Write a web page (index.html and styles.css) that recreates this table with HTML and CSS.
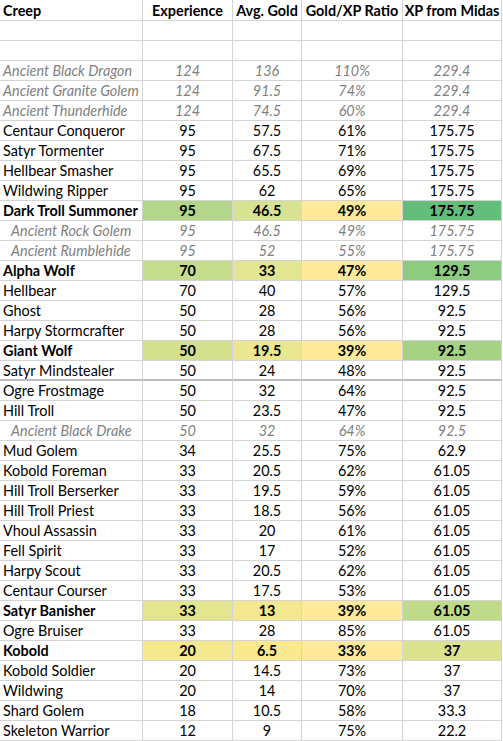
FILE: index.html
```html
<!DOCTYPE html>
<html lang="en">
<head>
<meta charset="utf-8">
<title>Creep XP table</title>
<link rel="stylesheet" href="styles.css">
</head>
<body>
<table class="sheet">
  <thead>
    <tr class="head">
      <th class="c1">Creep</th>
      <th class="c2">Experience</th>
      <th class="c3">Avg. Gold</th>
      <th class="c4">Gold/XP Ratio</th>
      <th class="c5">XP from Midas</th>
    </tr>
  </thead>
  <tbody>
    <tr><td></td><td></td><td></td><td></td><td></td></tr>
    <tr><td></td><td></td><td></td><td></td><td></td></tr>
    <tr class="anc"><td>Ancient Black Dragon</td><td>124</td><td>136</td><td>110%</td><td>229.4</td></tr>
    <tr class="anc"><td>Ancient Granite Golem</td><td>124</td><td>91.5</td><td>74%</td><td>229.4</td></tr>
    <tr class="anc"><td>Ancient Thunderhide</td><td>124</td><td>74.5</td><td>60%</td><td>229.4</td></tr>
    <tr><td>Centaur Conqueror</td><td>95</td><td>57.5</td><td>61%</td><td>175.75</td></tr>
    <tr><td>Satyr Tormenter</td><td>95</td><td>67.5</td><td>71%</td><td>175.75</td></tr>
    <tr><td>Hellbear Smasher</td><td>95</td><td>65.5</td><td>69%</td><td>175.75</td></tr>
    <tr><td>Wildwing Ripper</td><td>95</td><td>62</td><td>65%</td><td>175.75</td></tr>
    <tr class="hl"><td>Dark Troll Summoner</td><td class="e95">95</td><td class="g46">46.5</td><td class="r">49%</td><td class="m175">175.75</td></tr>
    <tr class="anc ind"><td>Ancient Rock Golem</td><td>95</td><td>46.5</td><td>49%</td><td>175.75</td></tr>
    <tr class="anc ind"><td>Ancient Rumblehide</td><td>95</td><td>52</td><td>55%</td><td>175.75</td></tr>
    <tr class="hl"><td>Alpha Wolf</td><td class="e70">70</td><td class="g33">33</td><td class="r">47%</td><td class="m129">129.5</td></tr>
    <tr><td>Hellbear</td><td>70</td><td>40</td><td>57%</td><td>129.5</td></tr>
    <tr><td>Ghost</td><td>50</td><td>28</td><td>56%</td><td>92.5</td></tr>
    <tr><td>Harpy Stormcrafter</td><td>50</td><td>28</td><td>56%</td><td>92.5</td></tr>
    <tr class="hl"><td>Giant Wolf</td><td class="e50">50</td><td class="g19">19.5</td><td class="r">39%</td><td class="m92">92.5</td></tr>
    <tr class="split"><td>Satyr Mindstealer</td><td>50</td><td>24</td><td>48%</td><td>92.5</td></tr>
    <tr><td>Ogre Frostmage</td><td>50</td><td>32</td><td>64%</td><td>92.5</td></tr>
    <tr><td>Hill Troll</td><td>50</td><td>23.5</td><td>47%</td><td>92.5</td></tr>
    <tr class="anc ind"><td>Ancient Black Drake</td><td>50</td><td>32</td><td>64%</td><td>92.5</td></tr>
    <tr><td>Mud Golem</td><td>34</td><td>25.5</td><td>75%</td><td>62.9</td></tr>
    <tr><td>Kobold Foreman</td><td>33</td><td>20.5</td><td>62%</td><td>61.05</td></tr>
    <tr><td>Hill Troll Berserker</td><td>33</td><td>19.5</td><td>59%</td><td>61.05</td></tr>
    <tr><td>Hill Troll Priest</td><td>33</td><td>18.5</td><td>56%</td><td>61.05</td></tr>
    <tr><td>Vhoul Assassin</td><td>33</td><td>20</td><td>61%</td><td>61.05</td></tr>
    <tr><td>Fell Spirit</td><td>33</td><td>17</td><td>52%</td><td>61.05</td></tr>
    <tr><td>Harpy Scout</td><td>33</td><td>20.5</td><td>62%</td><td>61.05</td></tr>
    <tr><td>Centaur Courser</td><td>33</td><td>17.5</td><td>53%</td><td>61.05</td></tr>
    <tr class="hl"><td>Satyr Banisher</td><td class="e33">33</td><td class="g13">13</td><td class="r">39%</td><td class="m61">61.05</td></tr>
    <tr><td>Ogre Bruiser</td><td>33</td><td>28</td><td>85%</td><td>61.05</td></tr>
    <tr class="hl"><td>Kobold</td><td class="e20">20</td><td class="g6">6.5</td><td class="r">33%</td><td class="m37">37</td></tr>
    <tr><td>Kobold Soldier</td><td>20</td><td>14.5</td><td>73%</td><td>37</td></tr>
    <tr><td>Wildwing</td><td>20</td><td>14</td><td>70%</td><td>37</td></tr>
    <tr><td>Shard Golem</td><td>18</td><td>10.5</td><td>58%</td><td>33.3</td></tr>
    <tr><td>Skeleton Warrior</td><td>12</td><td>9</td><td>75%</td><td>22.2</td></tr>
  </tbody>
</table>
</body>
</html>
```

FILE: styles.css
```css
html, body {
  margin: 0;
  padding: 0;
  background: #ffffff;
}

.sheet {
  border-collapse: separate;
  border-spacing: 0;
  table-layout: fixed;
  width: 502px;
  font-family: Lato, "Liberation Sans", sans-serif;
  font-size: 14.4px;
  color: #000000;
}

.sheet th,
.sheet td {
  box-sizing: border-box;
  height: 20px;
  padding: 1px 0 0 0;
  line-height: 17px;
  border-right: 1px solid #d4d4d4;
  border-bottom: 1px solid #d4d4d4;
  text-align: center;
  vertical-align: top;
  white-space: nowrap;
  overflow: hidden;
}

.sheet th {
  height: 21px;
  padding-top: 2px;
  font-weight: bold;
}

.sheet th:first-child,
.sheet td:first-child {
  text-align: left;
  padding-left: 3px;
}

.c1 { width: 143px; }
.c2 { width: 90px; }
.c3 { width: 69px; }
.c4 { width: 101px; }
.c5 { width: 99px; }

.anc td {
  font-style: italic;
  color: #7f7f7f;
}

.ind td:first-child {
  padding-left: 11px;
}

.hl td {
  font-weight: bold;
}

.split td {
  border-bottom: 2px solid #bcbcbc;
}

/* conditional-format fills */
.e95 { background: #b3d68b; border-color: #b3d68b; }
.e70 { background: #c4dc8c; border-color: #c4dc8c; }
.e50 { background: #d2e08d; border-color: #d2e08d; }
.e33 { background: #e4e58f; border-color: #e4e58f; }
.e20 { background: #f5e98f; border-color: #f5e98f; }

.g46 { background: #d8e293; border-color: #d8e293; }
.g33 { background: #e2e592; border-color: #e2e592; }
.g19 { background: #eae790; border-color: #eae790; }
.g13 { background: #f3e88f; border-color: #f3e88f; }
.g6  { background: #fbe98e; border-color: #fbe98e; }

.r { background: #feea9a; border-color: #feea9a; }

.m175 { background: #63be7b; border-color: #63be7b; }
.m129 { background: #8dcb80; border-color: #8dcb80; }
.m92  { background: #a6d284; border-color: #a6d284; }
.m61  { background: #bfda89; border-color: #bfda89; }
.m37  { background: #dbe38f; border-color: #dbe38f; }
```
